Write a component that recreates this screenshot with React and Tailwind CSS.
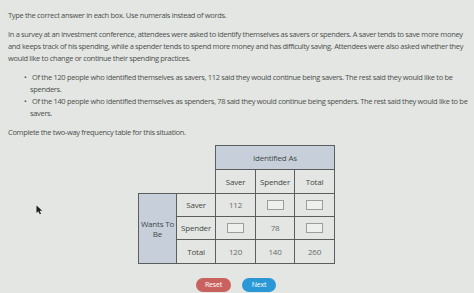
import React from "react";

// small input box shown in the empty cells
function Box() {
  return (
    <div className="mx-auto h-[10px] w-[17px] border border-[#9a9e9c] bg-[#eef0ee]" />
  );
}

function Cell({ children, className = "", ...rest }) {
  return (
    <td
      className={"border border-[#5a5e5c] p-0 text-center align-middle " + className}
      {...rest}
    >
      {children}
    </td>
  );
}

export default function App() {
  return (
    <div
      className="relative h-[293px] w-[474px] overflow-hidden bg-[#e3e6e2] text-[7.5px] leading-[12px] tracking-[-0.33px] text-[#4d504e]"
      style={{ fontFamily: '"Open Sans", sans-serif' }}
    >
      <div className="pl-[8px] pt-[9px]">
        <div className="whitespace-nowrap">Type the correct answer in each box. Use numerals instead of words.</div>

        <div className="mt-[7px] whitespace-nowrap">
          <div>
            In a survey at an investment conference, attendees were asked to identify themselves as savers or spenders. A saver tends to save more money
          </div>
          <div>
            and keeps track of his spending, while a spender tends to spend more money and has difficulty saving. Attendees were also asked whether they
          </div>
          <div>would like to change or continue their spending practices.</div>
        </div>

        <ul className="mt-[7px] whitespace-nowrap">
          <li className="flex">
            <span className="w-[24px] pl-[16px]">•</span>
            <div>
              <div>
                Of the 120 people who identified themselves as savers, 112 said they would continue being savers. The rest said they would like to be
              </div>
              <div className="-ml-[2px]">spenders.</div>
            </div>
          </li>
          <li className="flex">
            <span className="w-[24px] pl-[16px]">•</span>
            <div>
              <div>
                Of the 140 people who identified themselves as spenders, 78 said they would continue being spenders. The rest said they would like to be
              </div>
              <div className="-ml-[2px]">savers.</div>
            </div>
          </li>
        </ul>

        <div className="mt-[7px] whitespace-nowrap">Complete the two-way frequency table for this situation.</div>
      </div>

      <div className="ml-[138px] mt-[7px] w-[196px] tracking-[-0.2px]">
        <table className="w-[196px] table-fixed border-collapse text-[8px] leading-[10px] text-[#454846]">
          <colgroup>
            <col className="w-[38px]" />
            <col className="w-[39px]" />
            <col className="w-[40px]" />
            <col className="w-[39px]" />
            <col className="w-[40px]" />
          </colgroup>
          <tbody>
            <tr className="h-[24px]">
              <td colSpan={2} rowSpan={2} className="p-0" />
              <Cell colSpan={3} className="bg-[#c7d0da]">Identified As</Cell>
            </tr>
            <tr className="h-[24px]">
              <Cell>Saver</Cell>
              <Cell>Spender</Cell>
              <Cell>Total</Cell>
            </tr>
            <tr className="h-[23px]">
              <Cell rowSpan={3} className="bg-[#c7d0da]">
                Wants To
                <br />
                Be
              </Cell>
              <Cell>Saver</Cell>
              <Cell className="text-[#6a6d6b]">112</Cell>
              <Cell>
                <Box />
              </Cell>
              <Cell>
                <Box />
              </Cell>
            </tr>
            <tr className="h-[23px]">
              <Cell>Spender</Cell>
              <Cell>
                <Box />
              </Cell>
              <Cell className="text-[#6a6d6b]">78</Cell>
              <Cell>
                <Box />
              </Cell>
            </tr>
            <tr className="h-[24px]">
              <Cell>Total</Cell>
              <Cell className="text-[#6a6d6b]">120</Cell>
              <Cell className="text-[#6a6d6b]">140</Cell>
              <Cell className="text-[#6a6d6b]">260</Cell>
            </tr>
          </tbody>
        </table>

        <div className="mt-[14px] flex justify-center gap-[11px] text-[7px] leading-[14px] text-white">
          <button className="h-[14px] w-[35px] rounded-full bg-[#c9625e]">Reset</button>
          <button className="h-[14px] w-[34px] rounded-full bg-[#2a98d6]">Next</button>
        </div>
      </div>

      {/* mouse pointer */}
      <svg
        className="absolute left-[36px] top-[205px]"
        width="7"
        height="10"
        viewBox="0 0 7 10"
      >
        <path d="M0.5 0.5 L0.5 8 L2.3 6.3 L3.8 9.3 L5 8.7 L3.6 5.8 L6.2 5.8 Z" fill="#1c1c1c" />
      </svg>
    </div>
  );
}
